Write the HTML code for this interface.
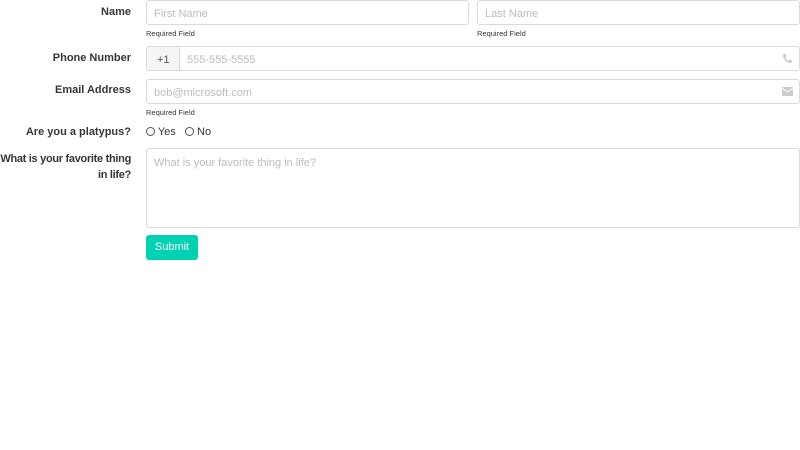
<!DOCTYPE html>
<html><head><style>
body{margin:0;width:800px;height:450px;background:#fff;font-family:"Liberation Sans",sans-serif;color:#363636;position:relative;overflow:hidden}
.l{position:absolute;right:669px;font-weight:bold;font-size:11px;text-align:right;color:#363636;line-height:16px;white-space:nowrap}
.in{position:absolute;border:1px solid #dbdbdb;border-radius:3px;box-sizing:border-box;background:#fff;font-size:11px;color:#bdbdbd;padding-left:7px;line-height:26px}
.h{position:absolute;font-size:7.5px;color:#363636}
</style></head><body>
<div class="l" style="top:4px">Name</div>
<div class="in" style="left:146px;top:0;width:323px;height:25px">First Name</div>
<div class="in" style="left:477px;top:0;width:323px;height:25px">Last Name</div>
<div class="h" style="left:146px;top:29px">Required Field</div>
<div class="h" style="left:477px;top:29px">Required Field</div>

<div class="l" style="top:50px">Phone Number</div>
<div class="in" style="left:146px;top:46px;width:34px;height:25px;background:#f5f5f5;color:#555;padding-left:10px;border-radius:3px 0 0 3px">+1</div>
<div class="in" style="left:179px;top:46px;width:621px;height:25px;border-radius:0 3px 3px 0">555-555-5555</div>
<svg style="position:absolute;left:782px;top:53px" width="11" height="11" viewBox="0 0 12 12"><path d="M2 1L4 1L5 4L3.5 5Q5 8 7.5 8.5L8.5 7L11 8L11 10Q10 11 8 11Q2 9 1 3Q1 1.5 2 1Z" fill="#ccc"/></svg>

<div class="l" style="top:82px">Email Address</div>
<div class="in" style="left:146px;top:79px;width:654px;height:25px">bob@microsoft.com</div>
<svg style="position:absolute;left:782px;top:87px" width="11" height="9" viewBox="0 0 11 9"><rect width="11" height="9" fill="#ccc"/><path d="M0 1L5.5 5L11 1" stroke="#fff" fill="none"/></svg>
<div class="h" style="left:146px;top:108px">Required Field</div>

<div class="l" style="top:124px">Are you a platypus?</div>
<div style="position:absolute;left:146px;top:126px;font-size:11px;color:#363636">
<span style="display:inline-block;width:7px;height:7px;border:1px solid #555;border-radius:50%;vertical-align:-1px"></span> Yes&nbsp;&nbsp;
<span style="display:inline-block;width:7px;height:7px;border:1px solid #555;border-radius:50%;vertical-align:-1px"></span> No</div>

<div class="l" style="top:151px;letter-spacing:-0.3px">What is your favorite thing<br>in life?</div>
<div class="in" style="left:146px;top:148px;width:654px;height:80px;line-height:28px">What is your favorite thing in life?</div>

<div style="position:absolute;left:146px;top:235px;width:52px;height:25px;background:#00d1b2;border-radius:3px;color:#fff;font-size:11px;text-align:center;line-height:25px">Submit</div>
</body></html>
